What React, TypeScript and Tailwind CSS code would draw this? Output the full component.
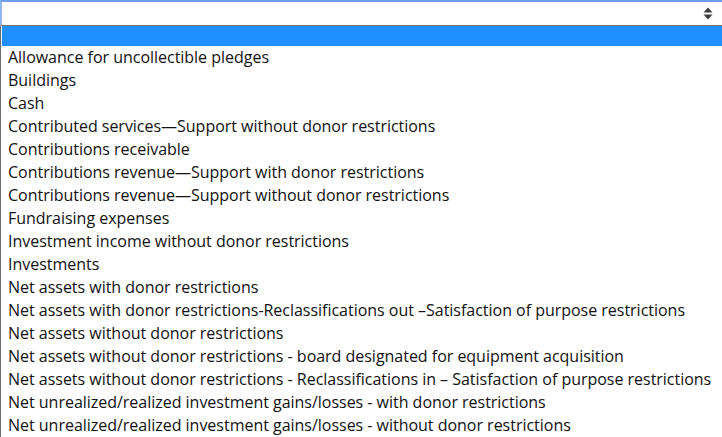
const accounts = [
  "Allowance for uncollectible pledges",
  "Buildings",
  "Cash",
  "Contributed services\u2014Support without donor restrictions",
  "Contributions receivable",
  "Contributions revenue\u2014Support with donor restrictions",
  "Contributions revenue\u2014Support without donor restrictions",
  "Fundraising expenses",
  "Investment income without donor restrictions",
  "Investments",
  "Net assets with donor restrictions",
  "Net assets with donor restrictions-Reclassifications out \u2013Satisfaction of purpose restrictions",
  "Net assets without donor restrictions",
  "Net assets without donor restrictions - board designated for equipment acquisition",
  "Net assets without donor restrictions - Reclassifications in \u2013 Satisfaction of purpose restrictions",
  "Net unrealized/realized investment gains/losses - with donor restrictions",
  "Net unrealized/realized investment gains/losses - without donor restrictions",
]

export default function App() {
  return (
    <div className="w-[722px] h-[437px] overflow-hidden bg-white font-['Open_Sans',sans-serif] text-[16px] tracking-[-0.02px] text-[#111]">
      {/* select box */}
      <div className="h-[26px] flex items-center justify-end border-t-2 border-l-2 border-b border-t-[#6a9ef2] border-l-[#8fb7f5] border-b-[#7a7a7a] pr-[9px]">
        <svg width="10" height="13" viewBox="0 0 10 13" className="text-[#3c3c3c]">
          <path d="M5 0.5 L9.5 5.5 L0.5 5.5 Z" fill="currentColor" />
          <path d="M0.5 7.5 L9.5 7.5 L5 12.5 Z" fill="currentColor" />
        </svg>
      </div>

      {/* dropdown list */}
      <div className="border-l border-[#6b6b6b] pl-px">
        <div className="h-[20px] bg-[#1e90ff]" />
        {accounts.map((a) => (
          <div key={a} className="h-[23px] leading-[23px] pl-[6px] whitespace-nowrap">
            {a}
          </div>
        ))}
      </div>
    </div>
  )
}
